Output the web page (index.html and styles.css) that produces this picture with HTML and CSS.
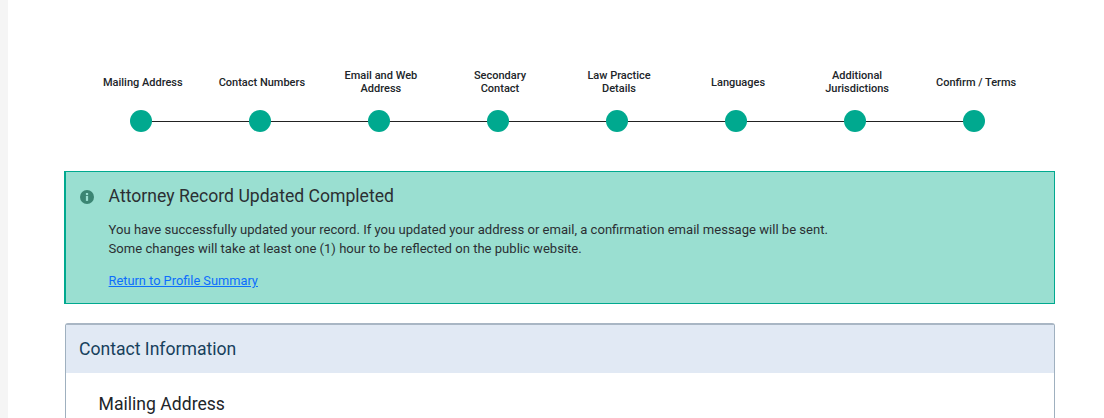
FILE: index.html
```html
<!DOCTYPE html>
<html lang="en">
<head>
    <meta charset="UTF-8">
    <meta name="viewport" content="width=device-width, initial-scale=1.0">
    <title>Attorney Record</title>
    <link rel="stylesheet" href="styles.css">
</head>
<body>
    <div class="side-strip"></div>
    <main class="content">
        <ol class="steps">
            <li class="step"><span class="step-label">Mailing Address</span><span class="step-dot"></span></li>
            <li class="step"><span class="step-label">Contact Numbers</span><span class="step-dot"></span></li>
            <li class="step"><span class="step-label">Email and Web Address</span><span class="step-dot"></span></li>
            <li class="step"><span class="step-label">Secondary Contact</span><span class="step-dot"></span></li>
            <li class="step"><span class="step-label">Law Practice Details</span><span class="step-dot"></span></li>
            <li class="step"><span class="step-label">Languages</span><span class="step-dot"></span></li>
            <li class="step"><span class="step-label">Additional Jurisdictions</span><span class="step-dot"></span></li>
            <li class="step"><span class="step-label">Confirm / Terms</span><span class="step-dot"></span></li>
        </ol>

        <section class="alert">
            <svg class="alert-icon" viewBox="0 0 14 14" width="14" height="14" aria-hidden="true">
                <circle cx="7" cy="7" r="7" fill="#3b8573"/>
                <rect x="5.9" y="6" width="2.2" height="4.9" fill="#9adfd1"/>
                <rect x="5.9" y="3" width="2.2" height="2.1" fill="#9adfd1"/>
            </svg>
            <div class="alert-body">
                <h2 class="alert-title">Attorney Record Updated Completed</h2>
                <p class="alert-text">You have successfully updated your record. If you updated your address or email, a confirmation email message will be sent.<br>Some changes will take at least one (1) hour to be reflected on the public website.</p>
                <a class="alert-link" href="#">Return to Profile Summary</a>
            </div>
        </section>

        <section class="card">
            <h2 class="card-header">Contact Information</h2>
            <div class="card-body">
                <h3 class="card-subtitle">Mailing Address</h3>
            </div>
        </section>
    </main>
</body>
</html>
```

FILE: styles.css
```css
html, body {
    height: 100%;
}
body {
    font-family: Roboto, "Liberation Sans", sans-serif;
    background-color: #fff;
    color: #212529;
    margin: 0;
    overflow: hidden;
    display: flex;
}
.side-strip {
    flex: 0 0 8px;
    background-color: #f5f5f5;
}
.content {
    flex: 1;
    height: 418px;
    overflow: hidden;
    padding: 0 49px 0 56px;
}

/* progress steps */
.steps {
    list-style: none;
    display: grid;
    grid-template-columns: repeat(8, 119.05px);
    margin: 0;
    padding: 69px 0 0 19.3px;
}
.step {
    position: relative;
    display: flex;
    flex-direction: column;
    align-items: center;
}
.step-label {
    display: flex;
    align-items: center;
    justify-content: center;
    height: 26px;
    padding: 0 14px;
    font-size: 11px;
    font-weight: 500;
    line-height: 13px;
    text-align: center;
    color: #212529;
}
.step-dot {
    position: relative;
    z-index: 1;
    width: 22px;
    height: 22px;
    margin: 15px 4.6px 0 0;
    border-radius: 50%;
    background-color: #00a98f;
}
.step::after {
    content: "";
    position: absolute;
    top: 52px;
    left: 57px;
    width: 119px;
    height: 1px;
    background-color: #222;
}
.step:last-child::after {
    display: none;
}

/* alert box */
.alert {
    display: flex;
    box-sizing: border-box;
    height: 133px;
    margin: 39px 0 19px 0;
    padding: 12px 16px 0 14px;
    color: #2b2f33;
    background-color: #9adfd1;
    border: 1px solid #00a98f;
    border-left-width: 2px;
}
.alert-icon {
    flex: none;
    margin-top: 6px;
}
.alert-title {
    margin: 0;
    font-size: 17.6px;
    font-weight: 400;
    line-height: 24px;
}
.alert-body {
    margin-left: 14.6px;
}
.alert-text {
    margin: 12px 0 12px;
    font-size: 13.07px;
    line-height: 19px;
}
.alert-link {
    font-size: 12.8px;
    line-height: 19px;
    color: #0d6efd;
}

/* contact card */
.card {
    box-sizing: border-box;
    margin-left: 1px;
    height: 200px;
    border: 1px solid #9fb0bf;
    border-top: 2px solid #a9b6c4;
    border-radius: 3px 3px 0 0;
}
.card-header {
    margin: 0;
    padding: 0 13px;
    height: 48px;
    font-size: 17.6px;
    font-weight: 400;
    line-height: 48px;
    color: #17405c;
    background-color: #e1e9f4;
}
.card-subtitle {
    margin: 0;
    padding: 19px 32.6px 0;
    font-size: 17.6px;
    font-weight: 400;
    line-height: 24px;
    color: #212529;
}
```
